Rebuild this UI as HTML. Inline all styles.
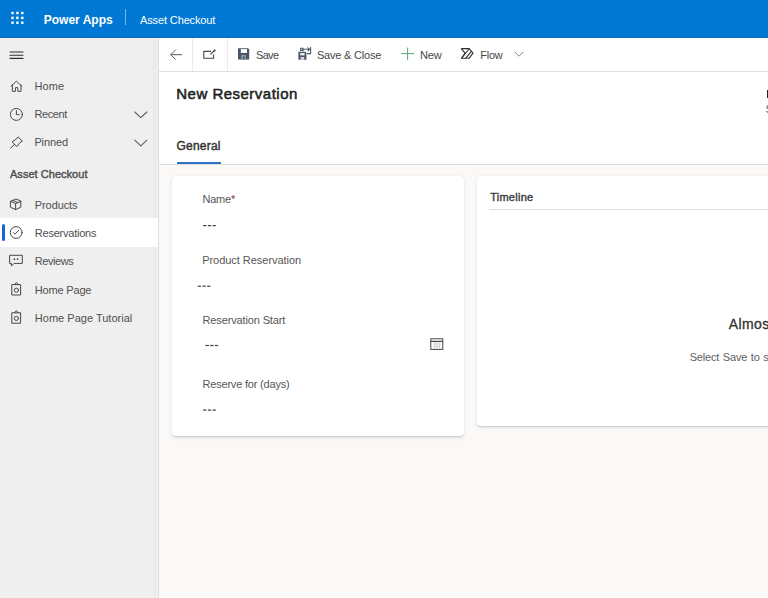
<!DOCTYPE html>
<html><head><meta charset="utf-8">
<style>
html,body{margin:0;padding:0;}
body{width:768px;height:598px;overflow:hidden;position:relative;background:#faf9f8;font-family:"Liberation Sans",sans-serif;}
.a{position:absolute;}
.t{position:absolute;white-space:nowrap;line-height:1;font-family:"Liberation Sans",sans-serif;}
svg{position:absolute;overflow:visible;}
</style></head><body>
<!-- header -->
<div class="a" style="left:0;top:0;width:768px;height:38px;background:#0078d4;"></div>
<div class="a" style="left:0;top:37px;width:768px;height:1px;background:#0b6cbb;"></div>
<svg style="left:0;top:0" width="40" height="38">
 <g fill="#fff">
  <rect x="11.3" y="11.8" width="2.4" height="2.4"/><rect x="16.2" y="11.8" width="2.4" height="2.4"/><rect x="21.1" y="11.8" width="2.4" height="2.4"/>
  <rect x="11.3" y="16.7" width="2.4" height="2.4"/><rect x="16.2" y="16.7" width="2.4" height="2.4"/><rect x="21.1" y="16.7" width="2.4" height="2.4"/>
  <rect x="11.3" y="21.5" width="2.4" height="2.4"/><rect x="16.2" y="21.5" width="2.4" height="2.4"/><rect x="21.1" y="21.5" width="2.4" height="2.4"/>
 </g>
</svg>
<div class="a" style="left:125px;top:9px;width:1px;height:16px;background:rgba(255,255,255,0.45);"></div>

<!-- sidebar -->
<div class="a" style="left:0;top:38px;width:159px;height:560px;background:#efefef;"></div>
<div class="a" style="left:153px;top:38px;width:3px;height:560px;background:#ebebeb;"></div>
<div class="a" style="left:158px;top:38px;width:1px;height:560px;background:#e0e0e0;"></div>
<!-- selected row -->
<div class="a" style="left:0;top:218px;width:158px;height:29px;background:#ffffff;"></div>
<div class="a" style="left:1.5px;top:224px;width:3px;height:17px;border-radius:1.5px;background:#1f5fd9;"></div>

<svg style="left:0;top:38px" width="159" height="300">
 <g fill="none" stroke="#484644" stroke-width="1" stroke-linecap="round" stroke-linejoin="round">
  <!-- hamburger -->
  <path d="M10 14H23M10 17.2H23M10 20.4H23" stroke="#323130" stroke-width="1.1"/>
  <!-- home -->
  <path d="M11 48.2L16.4 43.2L21.8 48.2M12.3 47V53.3H15.4V49.6H17.8V53.3H21V47"/>
  <!-- clock -->
  <circle cx="16.4" cy="76.4" r="6"/>
  <path d="M16.4 72.6V76.6H19"/>
  <!-- chevrons -->
  <path d="M134.8 74L140.8 79.7L146.9 74" stroke="#5f5d5b" stroke-width="1.1"/>
  <path d="M134.8 102.2L140.8 107.9L146.9 102.2" stroke="#5f5d5b" stroke-width="1.1"/>
  <!-- pin -->
  <path d="M18.4 99.2L22.3 103.1L20.2 104.4L16.9 108.6L12.1 103.9L16.1 101.2Z M14.3 106.4L10.6 110.3"/>
  <!-- cube -->
  <path d="M15.6 161.2L10.4 163.4V169.2L15.6 171.6L20.8 169.2V163.4Z M10.4 163.4L15.6 165.6L20.8 163.4 M15.6 165.6V171.4 M12.6 162.4L18 164.6"/>
  <!-- check circle -->
  <circle cx="16.2" cy="194.5" r="5.9"/>
  <path d="M13.5 194.6L15 196.2L18.8 192.2"/>
  <!-- reviews -->
  <path d="M10 217.3H22.3V225.4H14L11.4 228V225.4H10Z"/>
  <!-- home page (clipboard) -->
  <path d="M12.2 246.6H20.6V257H12.2Z M14.6 246.6L16.4 244.4L18.2 246.6"/>
  <circle cx="16.4" cy="252.2" r="2.1"/>
  <path d="M12.2 274.8H20.6V285.2H12.2Z M14.6 274.8L16.4 272.6L18.2 274.8"/>
  <circle cx="16.4" cy="280.4" r="2.1"/>
 </g>
 <g fill="#484644">
  <circle cx="14.4" cy="221.2" r="0.9"/><circle cx="17.6" cy="221.2" r="0.9"/>
 </g>
</svg>

<!-- command bar -->
<div class="a" style="left:159px;top:38px;width:609px;height:33px;background:#ffffff;"></div>
<div class="a" style="left:159px;top:71px;width:609px;height:1px;background:#e1dfdd;"></div>
<div class="a" style="left:192px;top:38px;width:1px;height:33px;background:#edebe9;"></div>
<div class="a" style="left:227px;top:38px;width:1px;height:33px;background:#edebe9;"></div>
<svg style="left:0;top:0" width="768" height="72">
 <g fill="none" stroke="#605e5c" stroke-width="1" stroke-linecap="round" stroke-linejoin="round">
  <path d="M170.8 54.7H181.6M175.6 49.9L170.8 54.7L175.6 59.5"/>
 </g>
 <g fill="none" stroke="#484644" stroke-width="1.1" stroke-linejoin="round">
  <path d="M211 51.4H203.8V58.2H213.6V54.6"/>
  <path d="M210.8 54L214.6 50.4" stroke-linecap="round"/>
 </g>
 <circle cx="214.6" cy="50.6" r="1.1" fill="#484644"/>
 <!-- save -->
 <path d="M238 48.2H248L249.2 49.4V59.6H238Z" fill="#4a5666"/>
 <rect x="240.8" y="49.1" width="6.2" height="3.8" fill="#fff"/>
 <rect x="241.2" y="55" width="4.8" height="4.6" fill="#8b97a5"/>
 <rect x="243.2" y="56.4" width="1.4" height="2.8" fill="#4a5666"/>
 <!-- save & close -->
 <path d="M298.4 51.8H305.4L306.4 52.8V59.8H298.4Z" fill="#4a5666"/>
 <rect x="300.2" y="53" width="4.4" height="2.4" fill="#e9ecef"/>
 <rect x="300.6" y="57" width="3.6" height="2.8" fill="#cfd5db"/>
 <g fill="none" stroke="#4a5666" stroke-width="1.1" stroke-linecap="round" stroke-linejoin="round">
  <path d="M300.6 48.2H303.2M300.6 50.4H303.2M300.6 48.2V50.4 M303 49.3H309.6M308 47.8L309.6 49.3L308 50.8 M310.6 47.6V53.6H307.4"/>
 </g>
 <!-- plus -->
 <path d="M401.2 53.6H414.2M407.6 47.6V60" stroke="#5aa57a" stroke-width="1" fill="none"/>
 <!-- flow -->
 <g fill="none" stroke="#323130" stroke-width="1.1" stroke-linejoin="round">
  <path d="M461.4 48.6H469.2L473 53.2L469.2 58.2H461.4L465 53.2Z"/>
  <path d="M462 57.6L469 49 M466 57.8L471.4 51.4"/>
 </g>
 <path d="M514.6 51.8L519 56.2L523.4 51.8" fill="none" stroke="#8a8886" stroke-width="1"/>
</svg>

<!-- form header -->
<div class="a" style="left:159px;top:72px;width:609px;height:92px;background:#ffffff;"></div>
<div class="a" style="left:159px;top:164px;width:609px;height:1px;background:#e1dfdd;"></div>
<div class="a" style="left:176.5px;top:162px;width:44.5px;height:2px;background:#2f6fc6;"></div>
<div class="a" style="left:766.5px;top:90px;width:2px;height:8px;background:#201f1e;"></div>
<div class="t" style="left:765.6px;top:104px;font-size:11px;color:#605e5c;">S</div>

<!-- cards -->
<div class="a" style="left:172px;top:176px;width:292px;height:260px;background:#fff;border-radius:4px;box-shadow:0 1.6px 3.6px rgba(0,0,0,0.10),0 0.3px 0.9px rgba(0,0,0,0.09);"></div>
<div class="a" style="left:477px;top:176px;width:300px;height:250px;background:#fff;border-radius:4px;box-shadow:0 1.6px 3.6px rgba(0,0,0,0.10),0 0.3px 0.9px rgba(0,0,0,0.09);"></div>
<div class="a" style="left:489px;top:209px;width:290px;height:1px;background:#e1dfdd;"></div>

<!-- dashes -->
<svg style="left:0;top:0" width="768" height="598"><rect x="203.20" y="225" width="3.2" height="1.2" fill="#3b3a39"/><rect x="207.90" y="225" width="3.2" height="1.2" fill="#3b3a39"/><rect x="212.60" y="225" width="3.2" height="1.2" fill="#3b3a39"/><rect x="197.80" y="285.6" width="3.2" height="1.2" fill="#3b3a39"/><rect x="202.50" y="285.6" width="3.2" height="1.2" fill="#3b3a39"/><rect x="207.20" y="285.6" width="3.2" height="1.2" fill="#3b3a39"/><rect x="205.40" y="344.9" width="3.5" height="1.2" fill="#484644"/><rect x="210.05" y="344.9" width="3.5" height="1.2" fill="#484644"/><rect x="214.70" y="344.9" width="3.5" height="1.2" fill="#484644"/><rect x="203.20" y="409.5" width="3.2" height="1.2" fill="#3b3a39"/><rect x="207.90" y="409.5" width="3.2" height="1.2" fill="#3b3a39"/><rect x="212.60" y="409.5" width="3.2" height="1.2" fill="#3b3a39"/></svg>
<svg style="left:0;top:0" width="768" height="598">
 <g fill="none" stroke="#484644" stroke-width="1">
  <rect x="430.8" y="338.8" width="12" height="10.6"/>
  <path d="M430.8 341.4H442.8" stroke-width="1.2"/>
 </g>
 <g fill="none" stroke="#c8c6c4" stroke-width="0.8">
  <path d="M434 344H440M434 346.6H440M434.2 342V349M437 342V349M439.8 342V349"/>
 </g>
</svg>

<div class="t" style="left:43.7px;top:14px;font-size:12px;font-weight:700;color:#ffffff;letter-spacing:0.009px;">Power Apps</div>
<div class="t" style="left:140.0px;top:15px;font-size:11px;font-weight:400;color:#ffffff;letter-spacing:-0.125px;">Asset Checkout</div>
<div class="t" style="left:34.4px;top:81px;font-size:11px;font-weight:400;color:#504e4c;letter-spacing:0.114px;">Home</div>
<div class="t" style="left:34.4px;top:109px;font-size:11px;font-weight:400;color:#504e4c;letter-spacing:-0.377px;">Recent</div>
<div class="t" style="left:34.4px;top:137px;font-size:11px;font-weight:400;color:#504e4c;letter-spacing:-0.111px;">Pinned</div>
<div class="t" style="left:10.0px;top:169px;font-size:11px;font-weight:400;color:#504e4c;letter-spacing:0.032px;-webkit-text-stroke:0.39px #504e4c;">Asset Checkout</div>
<div class="t" style="left:34.8px;top:200px;font-size:11px;font-weight:400;color:#504e4c;letter-spacing:-0.090px;">Products</div>
<div class="t" style="left:34.8px;top:228px;font-size:11px;font-weight:400;color:#504e4c;letter-spacing:-0.225px;">Reservations</div>
<div class="t" style="left:34.8px;top:256px;font-size:11px;font-weight:400;color:#504e4c;letter-spacing:-0.440px;">Reviews</div>
<div class="t" style="left:34.8px;top:285px;font-size:11px;font-weight:400;color:#504e4c;letter-spacing:-0.177px;">Home Page</div>
<div class="t" style="left:34.8px;top:313px;font-size:11px;font-weight:400;color:#504e4c;letter-spacing:0.016px;">Home Page Tutorial</div>
<div class="t" style="left:256.0px;top:50px;font-size:11px;font-weight:400;color:#484644;letter-spacing:-0.670px;">Save</div>
<div class="t" style="left:316.9px;top:50px;font-size:11px;font-weight:400;color:#484644;letter-spacing:-0.188px;">Save &amp; Close</div>
<div class="t" style="left:420.0px;top:50px;font-size:11px;font-weight:400;color:#484644;letter-spacing:-0.172px;">New</div>
<div class="t" style="left:480.3px;top:50px;font-size:11px;font-weight:400;color:#484644;letter-spacing:-0.259px;">Flow</div>
<div class="t" style="left:176.3px;top:86px;font-size:15px;font-weight:400;color:#201f1e;letter-spacing:0.485px;-webkit-text-stroke:0.53px #201f1e;">New Reservation</div>
<div class="t" style="left:176.5px;top:140px;font-size:12px;font-weight:400;color:#323130;letter-spacing:0.214px;-webkit-text-stroke:0.42px #323130;">General</div>
<div class="t" style="left:202.5px;top:194px;font-size:11px;font-weight:400;color:#575553;letter-spacing:-0.236px;">Name</div>
<div class="t" style="left:202.2px;top:255px;font-size:11px;font-weight:400;color:#575553;letter-spacing:-0.035px;">Product Reservation</div>
<div class="t" style="left:202.5px;top:315px;font-size:11px;font-weight:400;color:#575553;letter-spacing:-0.134px;">Reservation Start</div>
<div class="t" style="left:202.5px;top:379px;font-size:11px;font-weight:400;color:#575553;letter-spacing:-0.194px;">Reserve for (days)</div>
<div class="t" style="left:490.2px;top:192px;font-size:11px;font-weight:400;color:#3b3a39;letter-spacing:0.254px;-webkit-text-stroke:0.39px #3b3a39;">Timeline</div>
<div class="t" style="left:728.7px;top:317px;font-size:14px;font-weight:400;color:#323130;letter-spacing:0.000px;letter-spacing:0.4px;-webkit-text-stroke:0.3px #323130;">Almost there</div>
<div class="t" style="left:689.7px;top:352px;font-size:11px;font-weight:400;color:#605e5c;letter-spacing:0.000px;letter-spacing:-0.17px;word-spacing:0.7px;">Select Save to see your timeline.</div>
<div class="t" style="left:231px;top:194px;font-size:11px;color:#a4262c;">*</div>

</body></html>
